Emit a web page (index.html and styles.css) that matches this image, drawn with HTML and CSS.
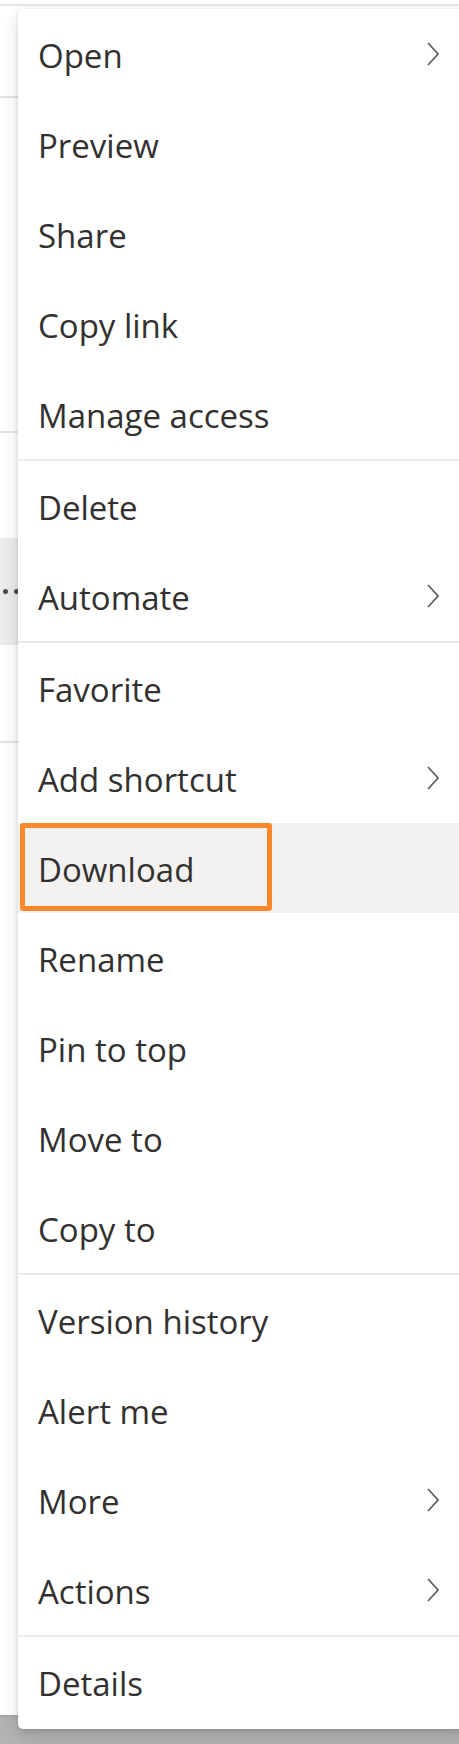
FILE: index.html
```html
<!DOCTYPE html>
<html lang="en">
<head>
<meta charset="utf-8">
<title>Context menu</title>
<link rel="stylesheet" href="styles.css">
</head>
<body>
<div class="page">
  <div class="list">
    <div class="topline"></div>
    <div class="row row-a"></div>
    <div class="row row-b"></div>
    <div class="gap"></div>
    <div class="row-selected"><span class="dots"><i></i><i></i><i></i></span></div>
    <div class="row row-c"></div>
    <div class="fill"></div>
    <div class="bottombar"></div>
  </div>

  <div class="menu">
    <div class="item"><span class="label">Open</span><svg class="chev" viewBox="0 0 12 24"><polyline points="1,1 11,12 1,23"/></svg></div>
    <div class="item"><span class="label">Preview</span></div>
    <div class="item"><span class="label">Share</span></div>
    <div class="item"><span class="label">Copy link</span></div>
    <div class="item"><span class="label">Manage access</span></div>
    <div class="divider"></div>
    <div class="item"><span class="label">Delete</span></div>
    <div class="item"><span class="label">Automate</span><svg class="chev" viewBox="0 0 12 24"><polyline points="1,1 11,12 1,23"/></svg></div>
    <div class="divider"></div>
    <div class="item"><span class="label">Favorite</span></div>
    <div class="item"><span class="label">Add shortcut</span><svg class="chev" viewBox="0 0 12 24"><polyline points="1,1 11,12 1,23"/></svg></div>
    <div class="item item-hover"><span class="label">Download</span><span class="highlight"></span></div>
    <div class="item"><span class="label">Rename</span></div>
    <div class="item"><span class="label">Pin to top</span></div>
    <div class="item"><span class="label">Move to</span></div>
    <div class="item"><span class="label">Copy to</span></div>
    <div class="divider"></div>
    <div class="item"><span class="label">Version history</span></div>
    <div class="item"><span class="label">Alert me</span></div>
    <div class="item"><span class="label">More</span><svg class="chev" viewBox="0 0 12 24"><polyline points="1,1 11,12 1,23"/></svg></div>
    <div class="item"><span class="label">Actions</span><svg class="chev" viewBox="0 0 12 24"><polyline points="1,1 11,12 1,23"/></svg></div>
    <div class="divider"></div>
    <div class="item"><span class="label">Details</span></div>
  </div>
</div>
</body>
</html>
```
FILE: styles.css
```css
html, body {
  margin: 0;
  padding: 0;
  background: #ffffff;
}

.page {
  position: relative;
  width: 459px;
  height: 1744px;
  overflow: hidden;
  font-family: "Open Sans", "Noto Sans", "Liberation Sans", sans-serif;
}

.list {
  display: flex;
  flex-direction: column;
  height: 1744px;
}

.topline {
  margin-top: 4px;
  height: 2px;
  background: #e6e6e6;
  flex: none;
}

.row {
  flex: none;
  border-bottom: 2px solid #e4e4e4;
}

.row-a { height: 90px; }
.row-b { height: 333px; }
.gap { height: 105px; flex: none; }

.row-selected {
  flex: none;
  height: 107px;
  background: #ebebeb;
  display: flex;
  align-items: center;
}

.dots {
  display: flex;
  gap: 6px;
  padding-left: 3px;
}

.dots i {
  display: block;
  width: 5px;
  height: 5px;
  border-radius: 50%;
  background: #4a4a4a;
}

.row-c { height: 96px; }

.fill { flex: 1; }

.bottombar {
  flex: none;
  height: 29px;
  background: linear-gradient(#a2a2a2, #b2b2b2 3px, #b4b4b4);
}

.menu {
  position: absolute;
  left: 18px;
  top: 9px;
  width: 452px;
  padding-bottom: 2px;
  background: #ffffff;
  border-radius: 5px;
  box-shadow: 0 8px 18px rgba(0, 0, 0, 0.13), 0 1.5px 4.5px rgba(0, 0, 0, 0.11);
  display: flex;
  flex-direction: column;
}

.item {
  position: relative;
  height: 90px;
  display: flex;
  align-items: center;
  justify-content: space-between;
  padding-left: 20px;
  color: #323130;
  font-size: 33px;
}

.item-hover {
  background: #f3f2f1;
}

.label {
  display: block;
  line-height: 1;
  margin-top: 2px;
}

.chev {
  width: 12px;
  height: 24px;
  margin-right: 31px;
  flex: none;
}

.chev polyline {
  fill: none;
  stroke: #605e5c;
  stroke-width: 1.7;
}

.divider {
  height: 2px;
  background: #edebe9;
  flex: none;
}

.highlight {
  position: absolute;
  left: 2px;
  top: 0;
  width: 252px;
  height: 88px;
  box-sizing: border-box;
  border: 5px solid #fd872b;
  border-radius: 3px;
}
```
